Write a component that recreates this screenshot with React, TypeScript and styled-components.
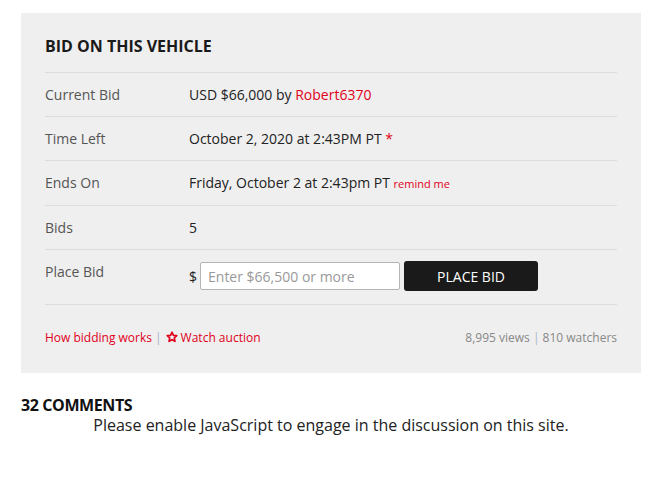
import React from "react";
import styled, { createGlobalStyle } from "styled-components";

const GlobalStyle = createGlobalStyle`
    body {
        margin: 0;
        padding: 13px 13px 0 21px;
        font-family: "Open Sans", "Liberation Sans", sans-serif;
        background: #fff;
        color: #222;
    }
`;

const RED = "#e0001b";

const Page = styled.div`
    width: 620px;
`;

const Panel = styled.div`
    background-color: #efefef;
    padding: 22px 24px 25px;
`;

const Title = styled.h2`
    margin: 0 0 15px;
    font-size: 16px;
    line-height: 22px;
    font-weight: 700;
    color: #1a1a1a;
    text-transform: uppercase;
`;

const Row = styled.div<{ last?: boolean }>`
    display: grid;
    grid-template-columns: 144px 1fr;
    align-items: start;
    border-top: 1px solid #dcdcdc;
    border-bottom: ${({ last }) => (last ? "1px solid #dcdcdc" : "none")};
    padding: ${({ last }) => (last ? "12px 0 13px" : "12px 0 11px")};
    min-height: 20px;
`;

const Label = styled.div`
    font-size: 14px;
    line-height: 20px;
    color: #555;
`;

const Value = styled.div`
    font-size: 14px;
    line-height: 20px;
    color: #222;
`;

const RedLink = styled.a<{ small?: boolean }>`
    color: ${RED};
    text-decoration: none;
    font-size: ${({ small }) => (small ? "11px" : "inherit")};
    cursor: pointer;
`;

const BidForm = styled.div`
    display: flex;
    align-items: center;
    gap: 4px;
    margin-top: -1px;
`;

const Currency = styled.span`
    font-size: 14px;
    margin-right: -1px;
`;

const BidInput = styled.input`
    box-sizing: border-box;
    width: 200px;
    height: 28px;
    border: 1px solid #b5b5b5;
    border-radius: 2px;
    background: #fff;
    padding: 0 7px;
    font-family: inherit;
    font-size: 14px;
    color: #222;
    &::placeholder {
        color: #999;
    }
`;

const BidButton = styled.button`
    width: 134px;
    height: 30px;
    border: none;
    border-radius: 3px;
    background-color: #1a1a1a;
    color: #fff;
    font-family: inherit;
    font-size: 14px;
    text-transform: uppercase;
    cursor: pointer;
`;

const Footer = styled.div`
    display: flex;
    justify-content: space-between;
    align-items: center;
    padding-top: 23px;
    line-height: 20px;
`;

const FooterLinks = styled.div`
    display: flex;
    align-items: center;
    font-size: 12px;
`;

const Sep = styled.span<{ tight?: boolean }>`
    color: #a9b4c2;
    margin: ${({ tight }) => (tight ? "0" : "0 4px 0 3px")};
`;

const Stats = styled.div`
    font-size: 12px;
    color: #888;
`;

const StarIcon = styled.svg`
    width: 12px;
    height: 12px;
    margin-right: 3px;
    vertical-align: -1px;
`;

const CommentsTitle = styled.h3`
    margin: 22px 0 0;
    font-size: 16px;
    line-height: 20px;
    font-weight: 700;
    letter-spacing: -0.4px;
    color: #111;
`;

const Notice = styled.p`
    margin: 0;
    text-align: center;
    font-size: 16px;
    line-height: 20px;
    color: #222;
`;

const rows = [
    { label: "Current Bid", value: <>USD $66,000 by <RedLink>Robert6370</RedLink></> },
    { label: "Time Left", value: <>October 2, 2020 at 2:43PM PT <RedLink>*</RedLink></> },
    { label: "Ends On", value: <>Friday, October 2 at 2:43pm PT <RedLink small>remind me</RedLink></> },
    { label: "Bids", value: <>5</> },
];

const App = () => {
    return (
        <Page>
            <GlobalStyle />
            <Panel>
                <Title>Bid on this vehicle</Title>
                {rows.map((r) => (
                    <Row key={r.label}>
                        <Label>{r.label}</Label>
                        <Value>{r.value}</Value>
                    </Row>
                ))}
                <Row last>
                    <Label>Place Bid</Label>
                    <BidForm>
                        <Currency>$</Currency>
                        <BidInput placeholder="Enter $66,500 or more" />
                        <BidButton>Place Bid</BidButton>
                    </BidForm>
                </Row>
                <Footer>
                    <FooterLinks>
                        <RedLink>How bidding works</RedLink>
                        <Sep>|</Sep>
                        <RedLink>
                            <StarIcon viewBox="0 0 24 24">
                                <path
                                    d="M12 2.5l2.9 6.1 6.6.8-4.9 4.6 1.3 6.6L12 17.3l-5.9 3.3 1.3-6.6-4.9-4.6 6.6-.8z"
                                    fill="none"
                                    stroke={RED}
                                    strokeWidth="3.4"
                                    strokeLinejoin="round"
                                />
                            </StarIcon>
                            Watch auction
                        </RedLink>
                    </FooterLinks>
                    <Stats>
                        8,995 views <Sep tight>|</Sep> 810 watchers
                    </Stats>
                </Footer>
            </Panel>
            <CommentsTitle>32 COMMENTS</CommentsTitle>
            <Notice>Please enable JavaScript to engage in the discussion on this site.</Notice>
        </Page>
    );
};

export default App;
